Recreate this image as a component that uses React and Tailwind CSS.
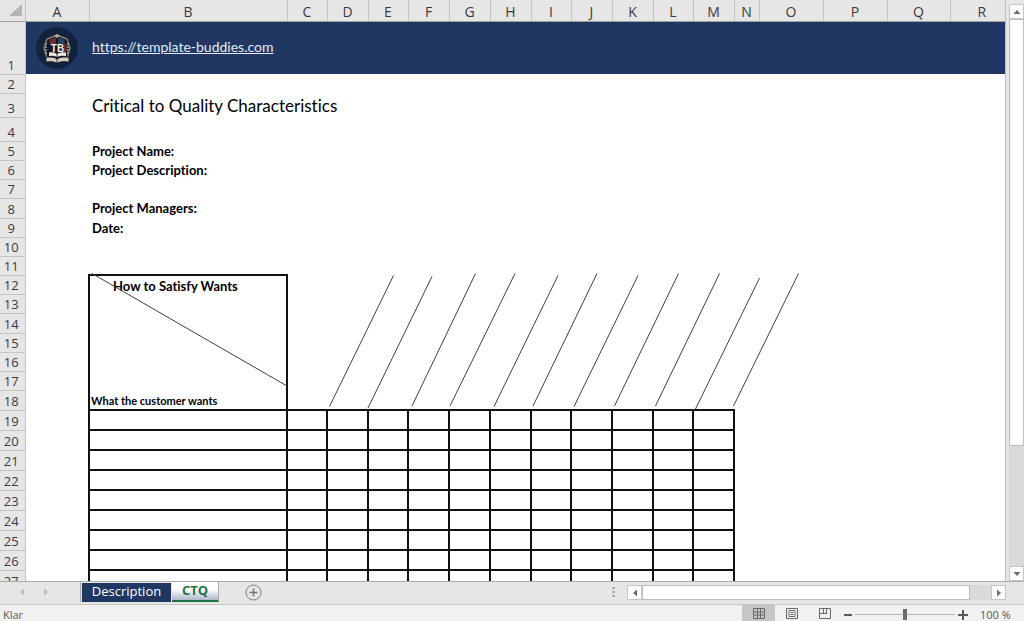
import { useState } from 'react'
import clsx from 'clsx'

const columns = [
    { name: 'A', width: 'w-[64px]' },
    { name: 'B', width: 'w-[198px]' },
    { name: 'C', width: 'w-[40px]' },
    { name: 'D', width: 'w-[41px]' },
    { name: 'E', width: 'w-[40px]' },
    { name: 'F', width: 'w-[41px]' },
    { name: 'G', width: 'w-[41px]' },
    { name: 'H', width: 'w-[41px]' },
    { name: 'I', width: 'w-[40px]' },
    { name: 'J', width: 'w-[41px]' },
    { name: 'K', width: 'w-[41px]' },
    { name: 'L', width: 'w-[40px]' },
    { name: 'M', width: 'w-[41px]' },
    { name: 'N', width: 'w-[25px]' },
    { name: 'O', width: 'w-[64px]' },
    { name: 'P', width: 'w-[64px]' },
    { name: 'Q', width: 'w-[63px]' },
    { name: 'R', width: '' },
]

const heights = {
    1: 'h-[53px]',
    3: 'h-6',
    4: 'h-6',
    8: 'h-5',
    14: 'h-5',
    18: 'h-5',
}

const labels = {
    5: 'Project Name:',
    6: 'Project Description:',
    8: 'Project Managers:',
    9: 'Date:',
}

// Lines drawn on top of the cells, as [x1, y1, x2, y2]
const lines = [
    [92, 273.5, 287, 386],
    [329.5, 406.5, 393.5, 275.5],
    [368, 408, 432, 276.5],
    [412, 406, 475.5, 273.5],
    [450, 406, 515, 273.5],
    [494, 406.5, 558, 275.5],
    [533, 406, 597, 273.5],
    [574, 406.5, 638, 275.5],
    [614.5, 406, 678.5, 273.5],
    [655.5, 406, 719.5, 273.5],
    [695.5, 409, 759.5, 278],
    [733.5, 406, 798.5, 273.5],
]

const rows = Array.from({ length: 27 }, (_, i) => i + 1)

const Logo = () => (
    <svg viewBox="0 0 42 42" className="mx-auto block h-[42px] w-[42px]" aria-hidden="true">
        <circle cx="21" cy="21" r="21" fill="#11233f" />
        <path d="M21 8 L31 12 L34 21 L31 31 L21 35 L11 31 L8 21 L11 12 Z" fill="#15161f" stroke="#8d8078" strokeWidth="1.4" />
        <path d="M14 12 L20 10.5 V17 H13 Z" fill="#6b2a30" />
        <path d="M22 10.5 L28 12 L29 17 H22 Z" fill="#29405f" />
        <path d="M28 17h3v8h-3z" fill="#5a2a2f" />
        <path d="M18 9 L21 7 L24 9 L21 11 Z" fill="#b7a695" />
        <path d="M10 16 V27 M32 16 V27" stroke="#b9aca0" strokeWidth="1.4" strokeDasharray="2 1" />
        <text x="21.5" y="25" textAnchor="middle" fontSize="10" fontWeight="700" fill="#f4f1f1" fontFamily="Liberation Sans, sans-serif">TB</text>
        <path d="M13 25.5 Q18 24.5 21 27 Q24 24.5 30 25.5 V29 Q25 28 21 30 Q17 28 13 29 Z" fill="#ece6e2" />
        <path d="M10 30.5 Q17 29 21 32 Q25 29 33 30.5 V35 Q26 33.5 21 36 Q16 33.5 10 35 Z" fill="#d8cbc0" stroke="#15161f" strokeWidth="0.8" />
        <path d="M21 26 V36" stroke="#15161f" strokeWidth="0.8" />
    </svg>
)

const arrows = {
    up: '0.5,6 7.5,6 4,2',
    down: '0.5,2 7.5,2 4,6',
    left: '6,0.5 6,7.5 2,4',
    right: '2,0.5 2,7.5 6,4',
}

const Arrow = ({ direction }) => (
    <svg viewBox="0 0 8 8" className="h-2 w-2" aria-hidden="true">
        <polygon points={arrows[direction]} fill="currentColor" />
    </svg>
)

const ScrollButton = ({ direction, label }) => (
    <button type="button" aria-label={label} className="flex h-[15px] w-[15px] shrink-0 items-center justify-center border border-[#c6c6c6] bg-white text-[#6a6a6a]">
        <Arrow direction={direction} />
    </button>
)

const Cell = ({ row, column }) => {
    const inBox = column === 'B' && row >= 12 && row <= 18
    const inGrid = row >= 19 && column >= 'B' && column <= 'M'

    return (
        <td
            className={clsx(
                'p-0 whitespace-nowrap',
                column === 'B' && !inBox && 'pl-[3px]',
                inBox && 'border-x-2 border-[#111111] pl-px align-bottom',
                inBox && row === 12 && 'border-t-2',
                inGrid && 'border-2 border-[#111111]',
            )}
        >
            {column === 'B' && row === 3 && <h1 className="pt-[2px] text-[17px] leading-5">Critical to Quality Characteristics</h1>}
            {column === 'B' && labels[row] && <span className="block leading-4 font-bold">{labels[row]}</span>}
            {column === 'B' && row === 12 && <span className="block pl-[22px] leading-4 font-bold">How to Satisfy Wants</span>}
            {column === 'B' && row === 18 && <span className="block text-[11px] leading-4 font-bold">What the customer wants</span>}
        </td>
    )
}

const Sheet = () => (
    <div className="relative min-w-0 flex-1 overflow-hidden border-r border-[#bdbdbd] bg-white">
        {/* Column R runs a little past the visible edge */}
        <table className="w-[calc(100%+8px)] table-fixed border-collapse font-['Lato',sans-serif] text-[13px] text-black [font-variant-ligatures:none]">
            <colgroup>
                <col className="w-[25px]" />
                {columns.map(({ name, width }) => <col key={name} className={width} />)}
            </colgroup>
            <thead>
                <tr className="h-[21px] bg-[#e6e6e6] font-['Open_Sans',sans-serif] text-sm text-[#3b3b3b]">
                    <th className="border-b border-[#a0a0a0] p-0" aria-label="Select all">
                        <svg viewBox="0 0 14 14" className="ml-2 h-[14px] w-[14px]" aria-hidden="true">
                            <polygon points="14,1 14,13 1,13" fill="#b4b4b4" />
                        </svg>
                    </th>
                    {columns.map(({ name }) => (
                        <th key={name} scope="col" className="border-x border-b border-x-[#c4c4c4] border-b-[#a0a0a0] p-0 pt-1 leading-4 font-normal last:border-r-0">{name}</th>
                    ))}
                </tr>
            </thead>
            <tbody>
                {rows.map((row) => (
                    <tr key={row} className={heights[row] ?? (row >= 19 ? 'h-5' : 'h-[19px]')}>
                        <th scope="row" className="border-r border-b border-[#c4c4c4] bg-[#e6e6e6] p-0 pr-[2px] pb-px align-bottom font-['Open_Sans',sans-serif] leading-4 font-normal text-[#3b3b3b]">{row}</th>
                        {row === 1 ? (
                            <>
                                <td className="bg-[#203764] p-0"><Logo /></td>
                                <td colSpan={17} className="bg-[#203764] p-0 pl-[3px]">
                                    <a href="https://template-buddies.com" className="text-sm leading-4 text-[#e6ebf5] underline">https://template-buddies.com</a>
                                </td>
                            </>
                        ) : (
                            columns.map(({ name }) => <Cell key={name} row={row} column={name} />)
                        )}
                    </tr>
                ))}
            </tbody>
        </table>
        <svg className="pointer-events-none absolute inset-0 h-full w-full" aria-hidden="true">
            {lines.map(([x1, y1, x2, y2]) => (
                <line key={x2} x1={x1} y1={y1} x2={x2} y2={y2} stroke="#404040" strokeWidth="1" />
            ))}
        </svg>
    </div>
)

const VerticalScroll = () => (
    <div className="flex w-[18px] shrink-0 flex-col items-end pt-1">
        <ScrollButton direction="up" label="Scroll up" />
        <div className="w-[15px] flex-1 bg-[#dadada]">
            <div className="h-[78%] border border-[#bdbdbd] bg-white" />
        </div>
        <ScrollButton direction="down" label="Scroll down" />
    </div>
)

const SheetTabs = () => (
    <div className="flex h-[23px] shrink-0 items-start border-t border-[#ababab] bg-[#e6e6e6]">
        <div className="mr-px flex h-5 w-[81px] shrink-0 items-center gap-4 border-r border-[#ababab] pl-[18px] text-[#bcbcbc]">
            <button type="button" aria-label="Previous sheet" className="w-2"><Arrow direction="left" /></button>
            <button type="button" aria-label="Next sheet" className="w-2"><Arrow direction="right" /></button>
        </div>
        <button type="button" className="mt-px h-[19px] w-[89px] bg-[#203764] pb-[6px] text-[13px] leading-4 text-white">Description</button>
        <button type="button" aria-current="page" className="ml-px h-5 w-[47px] border-r border-b-2 border-r-[#ababab] border-b-[#217346] bg-linear-to-b from-white from-40% to-[#aeb8cb] pb-[3px] text-[13px] leading-4 font-bold text-[#217346]">CTQ</button>
        <button type="button" aria-label="New sheet" className="mt-[2px] ml-[26px] text-[#7a7a7a]">
            <svg viewBox="0 0 17 17" className="h-[17px] w-[17px]" fill="none" stroke="currentColor">
                <circle cx="8.5" cy="8.5" r="7.5" />
                <path d="M4.5 8.5h8M8.5 4.5v8" strokeWidth="1.6" />
            </svg>
        </button>
        <div className="flex flex-1 items-center justify-end gap-3 pt-[3px] pr-[18px]">
            <svg viewBox="0 0 3 11" className="h-[11px] w-[3px] shrink-0" fill="#adadad" aria-hidden="true">
                <path d="M0 0h3v2H0zM0 4h3v2H0zM0 8h3v2H0z" />
            </svg>
            <div className="flex w-[37%] min-w-[379px] items-center">
                <ScrollButton direction="left" label="Scroll left" />
                <div className="h-[15px] flex-1 bg-[#dadada]">
                    <div className="h-full w-[94%] border border-[#bdbdbd] bg-white" />
                </div>
                <ScrollButton direction="right" label="Scroll right" />
            </div>
        </div>
    </div>
)

const ViewButton = ({ label, active, children }) => (
    <button type="button" aria-label={label} aria-pressed={active} className={clsx('flex h-4 w-[33px] items-center justify-center', active && 'bg-[#c6c6c6]')}>
        <svg viewBox="0 0 12 11" className="h-[11px] w-3" fill="none" stroke="#6a6a6a">{children}</svg>
    </button>
)

const StatusBar = () => {
    const [zoom, setZoom] = useState(100)

    return (
        <div className="flex h-[17px] shrink-0 items-start border-t border-[#c6c6c6] bg-[#f1f1f1] text-[11px] leading-4 text-[#5a5a5a]">
            <span className="flex-1 pt-[2px] pl-[3px]">Klar</span>
            <div className="flex items-center">
                <ViewButton label="Normal view" active>
                    <path d="M0.5 0.5h11v10h-11zM1 4h10M1 7h10M4.5 1v9M7.5 1v9" />
                </ViewButton>
                <ViewButton label="Page layout">
                    <path d="M0.5 0.5h11v10h-11zM3 2.5h6v6H3zM4.5 4.5h3M4.5 6.5h3" />
                </ViewButton>
                <ViewButton label="Page break preview">
                    <path d="M0.5 0.5h11v10h-11zM4.5 0.5v5M7.5 0.5v5M1 5.5h7" />
                </ViewButton>
            </div>
            <div className="flex h-[17px] items-center gap-[3px] pt-[2px] pl-[3px]">
                <button type="button" aria-label="Zoom out" onClick={() => setZoom(Math.max(10, zoom - 10))}>
                    <svg viewBox="0 0 8 8" className="h-2 w-2"><path d="M0 4h8" stroke="#5a5a5a" strokeWidth="2" /></svg>
                </button>
                <input
                    type="range"
                    aria-label="Zoom"
                    min="10"
                    max="190"
                    value={zoom}
                    onChange={(e) => setZoom(Number(e.target.value))}
                    className="h-[11px] w-[100px] appearance-none bg-transparent [&::-webkit-slider-runnable-track]:h-px [&::-webkit-slider-runnable-track]:bg-[#b5b5b5] [&::-webkit-slider-thumb]:-mt-[5px] [&::-webkit-slider-thumb]:h-[11px] [&::-webkit-slider-thumb]:w-1 [&::-webkit-slider-thumb]:appearance-none [&::-webkit-slider-thumb]:bg-[#6a6a6a]"
                />
                <button type="button" aria-label="Zoom in" onClick={() => setZoom(Math.min(190, zoom + 10))}>
                    <svg viewBox="0 0 10 10" className="h-[10px] w-[10px]"><path d="M0 5h10M5 0v10" stroke="#5a5a5a" strokeWidth="2" /></svg>
                </button>
            </div>
            <span className="w-14 pt-[2px] pl-3">{zoom} %</span>
        </div>
    )
}

const App = () => (
    <div className="flex h-screen flex-col overflow-hidden bg-[#e6e6e6] font-['Open_Sans',sans-serif]">
        <div className="flex min-h-0 flex-1">
            <Sheet />
            <VerticalScroll />
        </div>
        <SheetTabs />
        <StatusBar />
    </div>
)

export default App
